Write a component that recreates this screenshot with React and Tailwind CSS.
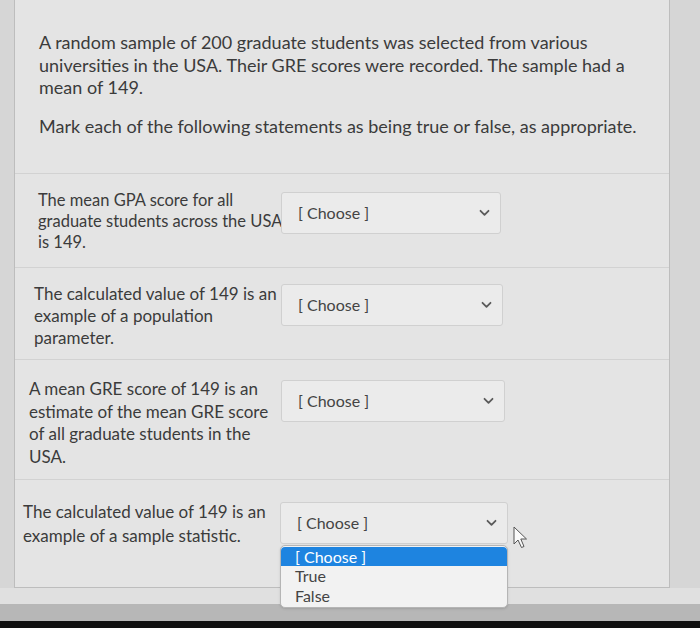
import React from 'react'

const ROWS = [
  { text: 'The mean GPA score for all graduate students across the USA is 149.', h: 'h-[94px]', pt: 'pt-[16px]', pl: 'pl-[23px]', tw: 'w-[256px] text-[16.5px] leading-[21px]', selMl: '-ml-[13px]', selMt: 'mt-[2px]', selW: 'w-[220px]' },
  { text: 'The calculated value of 149 is an example of a population parameter.', h: 'h-[92px]', pt: 'pt-[15px]', pl: 'pl-[19px]', tw: 'w-[250px] text-[17px] leading-[22px]', selMl: '-ml-[3px]', selMt: 'mt-[1px]', selW: 'w-[222px]' },
  { text: 'A mean GRE score of 149 is an estimate of the mean GRE score of all graduate students in the USA.', h: 'h-[120px]', pt: 'pt-[18px]', pl: 'pl-[14px]', tw: 'w-[250px] text-[17px] leading-[22.5px]', selMl: 'ml-[2px]', selMt: 'mt-[2px]', selW: 'w-[224px]' },
]

function Chevron() {
  return (
    <svg width="11" height="8" viewBox="0 0 11 8" className="shrink-0">
      <path d="M1.5 1.8 L5.5 5.8 L9.5 1.8" fill="none" stroke="#5a5a5a" strokeWidth="1.8" strokeLinecap="round" strokeLinejoin="round" />
    </svg>
  )
}

function SelectBox({ w }) {
  return (
    <div className={`${w} h-[42px] rounded-[3px] border border-[#d0d0d0] bg-[#ebebeb] flex items-center justify-between pl-[16px] pr-[10px]`}>
      <span className="text-[16px] text-[#444]">[ Choose ]</span>
      <Chevron />
    </div>
  )
}

export default function App() {
  return (
    <div className="w-[700px] h-[628px] bg-[#d6d6d6] overflow-hidden flex flex-col" style={{ fontFamily: 'Lato, "Open Sans", sans-serif' }}>
      <div className="ml-[14px] w-[656px] border-l border-r border-b border-[#bdbdbd] bg-[#e4e4e4] text-[#3b3b3b]">
        {/* intro */}
        <div className="pl-[24px] pt-[31px] h-[174px] border-b border-[#d2d2d2]">
          <p className="w-[606px] text-[18px] leading-[22.5px]">
            A random sample of 200 graduate students was selected from various universities in the USA. Their GRE scores were recorded. The sample had a mean of 149.
          </p>
          <p className="text-[18px] leading-[22.5px] mt-[16px]">
            Mark each of the following statements as being true or false, as appropriate.
          </p>
        </div>

        {ROWS.map((r, i) => (
          <div key={i} className={`${r.h} ${r.pt} ${r.pl} flex border-b border-[#d2d2d2]`}>
            <p className={`${r.tw} shrink-0`}>{r.text}</p>
            <div className={`${r.selMl} ${r.selMt}`}>
              <SelectBox w={r.selW} />
            </div>
          </div>
        ))}

        {/* last row with open dropdown */}
        <div className="h-[107px] pt-[20px] pl-[8px] flex">
          <p className="w-[252px] shrink-0 text-[17px] leading-[24px]">
            The calculated value of 149 is an example of a sample statistic.
          </p>
          <div className="relative ml-[5px] mt-[2px]">
            <SelectBox w="w-[228px]" />
            <div className="absolute left-0 top-[43px] w-[228px] rounded-[5px] border border-[#b5b5b5] bg-[#f2f2f2] pt-[1px] pb-[1px] shadow-sm z-10">
              <div className="h-[19px] leading-[19px] pl-[14px] bg-[#1e84e0] text-white text-[16px] rounded-t-[4px]">[ Choose ]</div>
              <div className="h-[20px] leading-[20px] pl-[14px] text-[16px] text-[#444]">True</div>
              <div className="h-[20px] leading-[20px] pl-[14px] text-[16px] text-[#444]">False</div>
            </div>
            <svg width="16" height="24" viewBox="0 0 16 24" className="absolute left-[233px] top-[24px]">
              <path d="M1 1 L1 18 L5 14 L8.5 21.5 L11 20.5 L7.8 13 L13.5 13 Z" fill="#fafafa" stroke="#555" strokeWidth="1" strokeLinejoin="round" />
            </svg>
          </div>
        </div>
      </div>
      <div className="h-[16px] bg-[#e0e0e0]" />
      <div className="h-[17px] bg-[#b7b7b7]" />
      <div className="flex-1 bg-[#111]" />
    </div>
  )
}
